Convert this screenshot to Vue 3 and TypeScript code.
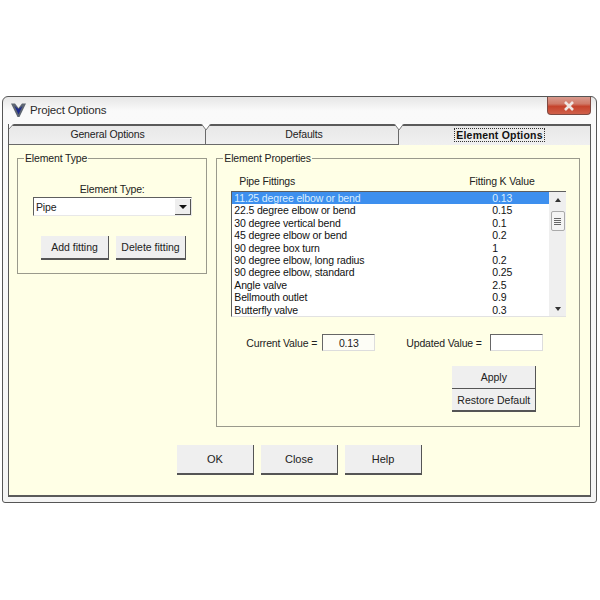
<script setup lang="ts">
interface Fitting { name: string; k: string }
const fittings: Fitting[] = [
  { name: '11.25 degree elbow or bend', k: '0.13' },
  { name: '22.5 degree elbow or bend', k: '0.15' },
  { name: '30 degree vertical bend', k: '0.1' },
  { name: '45 degree elbow or bend', k: '0.2' },
  { name: '90 degree box turn', k: '1' },
  { name: '90 degree elbow, long radius', k: '0.2' },
  { name: '90 degree elbow, standard', k: '0.25' },
  { name: 'Angle valve', k: '2.5' },
  { name: 'Bellmouth outlet', k: '0.9' },
  { name: 'Butterfly valve', k: '0.3' },
]
</script>

<template>
  <div class="window">
    <header class="titlebar">
      <svg class="logo" width="15" height="14" viewBox="0 0 15 14">
        <path d="M0 0.5 L4 0.5 L7.5 5 L11 0.5 L15 0.5 L8.5 14 L6.5 14 Z" fill="#5e6672" />
        <path d="M3.5 3 L7.5 6 L11.5 3 L7.5 11.5 Z" fill="#1c2a8c" />
      </svg>
      <span class="title">Project Options</span>
      <button class="close" type="button">
        <svg width="12" height="10" viewBox="0 0 12 10">
          <path d="M2 1 L10 9 M10 1 L2 9" stroke="#efe6e2" stroke-width="2.6" fill="none" />
        </svg>
      </button>
    </header>

    <nav class="tabs">
      <div class="tab">
        <svg class="corner" width="5" height="6" viewBox="0 0 5 6">
          <path d="M0 0 L0 5 L4.5 0 Z" fill="#fff" />
          <path d="M0 5 L4.5 0" stroke="#888" fill="none" />
        </svg>
        General Options
      </div>
      <div class="tab">
        <svg class="notch" width="10" height="7" viewBox="0 0 10 7">
          <path d="M0.5 0 L5 6 L9.5 0 Z" fill="#fff" />
          <path d="M0.5 0 L5 6 L9.5 0" stroke="#777" fill="none" />
        </svg>
        Defaults
      </div>
      <div class="tab active">
        <svg class="notch" width="10" height="7" viewBox="0 0 10 7">
          <path d="M0.5 0 L5 6 L9.5 0 Z" fill="#fff" />
          <path d="M0.5 0 L5 6 L9.5 0" stroke="#777" fill="none" />
        </svg>
        <span class="focus">Element Options</span>
      </div>
    </nav>

    <main class="panel">
      <div class="groups">
        <fieldset class="group type-group">
          <legend>Element Type</legend>
          <div class="type-body">
            <div class="type-label">Element Type:</div>
            <div class="select">
              <span>Pipe</span>
              <span class="select-arrow"></span>
            </div>
            <div class="type-buttons">
              <button class="btn add" type="button">Add fitting</button>
              <button class="btn del" type="button">Delete fitting</button>
            </div>
          </div>
        </fieldset>

        <fieldset class="group props-group">
          <legend>Element Properties</legend>
          <div class="props-body">
            <div class="list-head">
              <span>Pipe Fittings</span>
              <span>Fitting K Value</span>
            </div>
            <div class="list">
              <div class="rows">
                <div v-for="(f, i) in fittings" :key="f.name" class="row" :class="{ selected: i === 0 }">
                  <span class="row-name">{{ f.name }}</span>
                  <span class="row-k">{{ f.k }}</span>
                </div>
              </div>
              <div class="scrollbar">
                <span class="arrow up"></span>
                <span class="thumb"><i></i><i></i><i></i><i></i></span>
                <span class="arrow down"></span>
              </div>
            </div>
            <div class="values">
              <span class="val-label">Current Value =</span>
              <div class="input current">0.13</div>
              <span class="val-label updated">Updated Value =</span>
              <div class="input"></div>
            </div>
            <div class="stack">
              <button class="btn stacked" type="button">Apply</button>
              <button class="btn stacked" type="button">Restore Default</button>
            </div>
          </div>
        </fieldset>
      </div>

      <footer class="actions">
        <button class="btn big" type="button">OK</button>
        <button class="btn big" type="button">Close</button>
        <button class="btn big" type="button">Help</button>
      </footer>
    </main>
  </div>
</template>

<style>
html, body { background: #fff; }
</style>

<style scoped>
.window {
  box-sizing: border-box;
  width: 595px;
  height: 407px;
  margin: 96px 0 0 2px;
  padding: 0 5px 5px;
  border: 1px solid #565656;
  border-radius: 6px 6px 3px 3px;
  background: linear-gradient(#e6e6e6, #fafafa 14px, #f4f4f4);
  font-family: "Liberation Sans", Arial, sans-serif;
  letter-spacing: -0.15px;
  color: #222;
  display: flex;
  flex-direction: column;
}
.titlebar {
  height: 27px;
  flex: none;
  display: flex;
  align-items: flex-start;
}
.logo { margin: 6px 0 0 3px; }
.title { margin: 6px 0 0 4px; font-size: 11.5px; line-height: 14px; color: #2a2a2a; }
.close {
  width: 44px;
  height: 18px;
  margin-left: auto;
  padding: 0;
  border: 1px solid #7e4a42;
  border-top: none;
  border-radius: 0 0 4px 4px;
  background: linear-gradient(#d99a8e, #d07a68 40%, #c5432c 55%, #d0604a);
  display: flex;
  align-items: center;
  justify-content: center;
}
.tabs {
  flex: none;
  height: 19px;
  display: grid;
  grid-template-columns: 196px 193px 1fr;
  border-top: 2px solid #5a5a5a;
  border-left: 1px solid #5a5a5a;
  border-right: 1px solid #5a5a5a;
  font-size: 10.5px;
}
.tab {
  position: relative;
  display: flex;
  align-items: center;
  justify-content: center;
  padding-bottom: 2px;
  background: linear-gradient(#e8e8e8, #f0f0f0);
  border-left: 1px solid #6a6a6a;
  border-bottom: 1px solid #6a6a6a;
  color: #222;
}
.tab:nth-child(2) { padding-left: 4px; }
.corner { position: absolute; left: 0; top: -2px; }
.notch { position: absolute; left: -5.5px; top: -2px; }
.tab:first-child { border-left: none; padding-left: 1px; }
.tab.active {
  border-bottom: none;
  padding-left: 10px;
  font-weight: bold;
  letter-spacing: 0.2px;
  color: #111;
}
.focus { outline: 1px dotted #333; padding: 0 1px; line-height: 12px; }
.panel {
  flex: 1;
  min-height: 0;
  background: #ffffe6;
  border-left: 1px solid #5a5a5a;
  border-right: 1px solid #5a5a5a;
  border-bottom: 2px solid #5a5a5a;
  padding: 7px 10px 0 8px;
  display: flex;
  flex-direction: column;
}
.groups { display: flex; gap: 9px; align-items: flex-start; }
.group {
  box-sizing: border-box;
  margin: 0;
  padding: 0;
  min-width: 0;
  border: 1px solid #9a9a8c;
  font-size: 10.5px;
}
legend { padding: 0 1px; margin-left: 6px; font-size: 10.5px; line-height: 12px; color: #222; }
.type-group { width: 191px; height: 122px; }
.type-body { padding: 19px 15px 0; }
.type-label { text-align: center; line-height: 13px; }
.select {
  box-sizing: border-box;
  width: 159px;
  height: 19px;
  margin-top: 1px;
  padding-left: 2px;
  background: #fff;
  border: 1px solid;
  border-color: #5e5e5e #e8e8e8 #e8e8e8 #5e5e5e;
  display: flex;
  align-items: center;
  justify-content: space-between;
}
.select-arrow {
  width: 15px;
  height: 15px;
  background: #eee;
  border-right: 1px solid #555;
  border-bottom: 1px solid #555;
  position: relative;
}
.select-arrow::after {
  content: "";
  position: absolute;
  left: 4px;
  top: 6px;
  border: 4px solid transparent;
  border-top: 4px solid #111;
  border-bottom: none;
}
.type-buttons { display: flex; gap: 7px; margin: 20px 0 0 8px; }
.btn {
  box-sizing: border-box;
  padding: 0;
  background: #efefef;
  border: none;
  border-right: 1px solid #555;
  border-bottom: 2px solid #555;
  font: inherit;
  font-size: 10.5px;
  color: #222;
}
.add { width: 68px; height: 24px; }
.del { width: 70px; height: 24px; }
.props-group { width: 365px; height: 275px; }
.props-body { padding: 11px 14px 0; }
.list-head {
  display: grid;
  grid-template-columns: 230px auto;
  height: 14px;
  line-height: 13px;
  padding-left: 8px;
  white-space: nowrap;
}
.list {
  box-sizing: border-box;
  width: 335px;
  height: 126px;
  margin-top: 2px;
  background: #fff;
  border-left: 1px solid #5e5e5e;
  border-top: 1px solid #5e5e5e;
  border-bottom: 1px solid #e2e2e2;
  display: flex;
}
.rows { flex: 1; }
.row { height: 12.4px; display: flex; line-height: 12px; padding-left: 2px; color: #111; white-space: nowrap; }
.row.selected { background: #3d8fee; color: #d9eeff; }
.row-name { width: 258px; }
.scrollbar {
  width: 17px;
  background: #efefef;
  display: flex;
  flex-direction: column;
  align-items: center;
}
.arrow { width: 0; height: 0; border: 3.5px solid transparent; }
.arrow.up { border-bottom: 4px solid #333; border-top: none; margin-top: 6px; }
.arrow.down { border-top: 4px solid #333; border-bottom: none; margin-top: auto; margin-bottom: 5px; }
.thumb {
  box-sizing: border-box;
  width: 14px;
  height: 20px;
  margin-top: 9px;
  background: #f4f4f4;
  border: 1px solid #aaa;
  border-radius: 2px;
  display: flex;
  flex-direction: column;
  align-items: center;
  justify-content: center;
  gap: 1px;
}
.thumb i { width: 7px; height: 1px; background: #666; }
.values { display: flex; align-items: center; height: 17px; margin-top: 17px; padding-left: 15px; }
.val-label { width: 76px; white-space: nowrap; }
.val-label.updated { width: 84px; margin-left: 31px; }
.input {
  box-sizing: border-box;
  width: 53px;
  height: 17px;
  background: #fff;
  border: 1px solid;
  border-color: #666 #ddd #ddd #666;
  text-align: center;
  line-height: 17px;
}
.input.current { background: #fdfdf6; }
.stack {
  width: 84px;
  margin: 15px 0 0 221px;
  display: flex;
  flex-direction: column;
}
.stacked { width: 84px; height: 23px; }
.stacked:first-child { border-bottom: 1px solid #555; }
.actions { display: flex; gap: 7px; margin: 18px 0 0 160px; }
.big { width: 77px; height: 30px; font-size: 11px; }
</style>
